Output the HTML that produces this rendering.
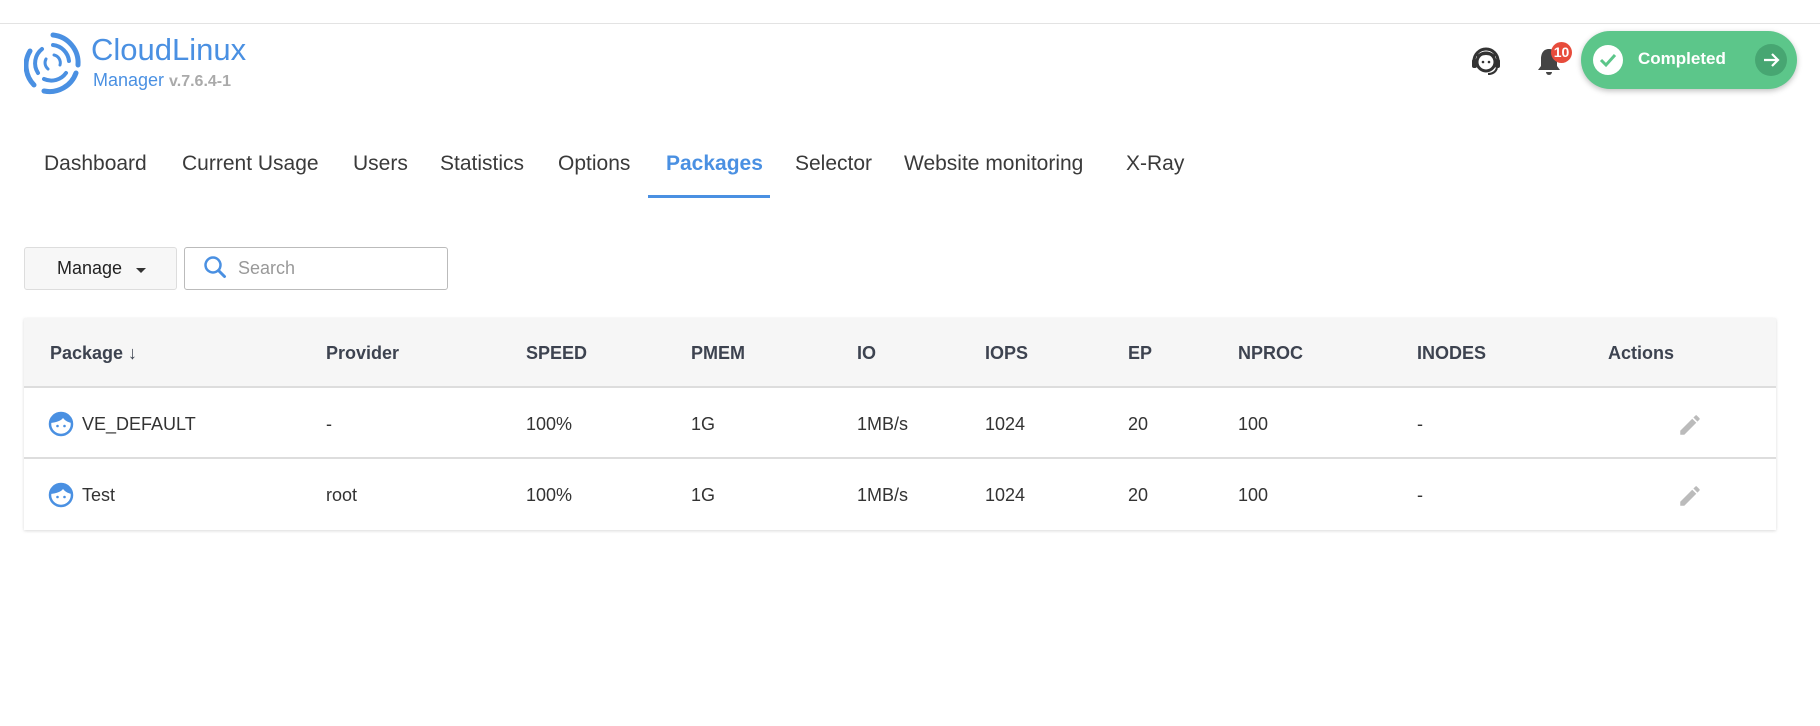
<!DOCTYPE html>
<html><head><meta charset="utf-8"><style>
*{margin:0;padding:0;box-sizing:border-box}
body{width:1820px;height:726px;background:#fff;font-family:"Liberation Sans",sans-serif;position:relative;overflow:hidden;color:#333}
.a{position:absolute;white-space:nowrap}
.nav{top:152px;font-size:21px;color:#3a3a3a}
.th{top:343px;font-size:18px;font-weight:bold;color:#3d4350}
.td{font-size:18px;color:#333}
</style></head><body>
<div class="a" style="left:0;top:23px;width:1820px;height:1px;background:#e3e3e3"></div>
<svg class="a" style="left:24px;top:31px" width="58" height="64" viewBox="0 0 58 64">
<g fill="none" stroke="#4a90e2" stroke-linecap="round">
<path d="M29 4 A28 28 0 0 1 54 34" stroke-width="5"/>
<path d="M52 42 A28 28 0 0 1 20 60" stroke-width="5"/>
<path d="M10 54 A28 28 0 0 1 6 20" stroke-width="5"/>
<path d="M29 14 A18 18 0 0 1 45 30" stroke-width="4"/>
<path d="M42 42 A18 18 0 0 1 20 48" stroke-width="4"/>
<path d="M14 42 A18 18 0 0 1 18 18" stroke-width="4"/>
<path d="M30 24 A8 8 0 0 1 36 34" stroke-width="3"/>
<path d="M24 38 A8 8 0 0 1 22 28" stroke-width="3"/>
</g></svg>
<div class="a" style="left:91px;top:32px;font-size:31px;color:#4a90e2">CloudLinux</div>
<div class="a" style="left:93px;top:70px;font-size:18px;color:#4a90e2">Manager <span style="color:#aaa;font-weight:bold;font-size:16px">v.7.6.4-1</span></div>

<svg class="a" style="left:1470px;top:43px" width="32" height="34" viewBox="0 0 32 34"><path d="M4 18a12 12 0 0 1 24 0" fill="none" stroke="#333" stroke-width="3"/><rect x="2" y="16" width="5" height="9" rx="2" fill="#333"/><rect x="25" y="16" width="5" height="9" rx="2" fill="#333"/><circle cx="16" cy="19" r="9" fill="#fff" stroke="#333" stroke-width="3"/><path d="M7 15q9-6 18 0v-3q-9-7-18 0z" fill="#333"/><circle cx="13" cy="19" r="1.3" fill="#333"/><circle cx="19" cy="19" r="1.3" fill="#333"/><path d="M27 25q-2 6-9 6" fill="none" stroke="#333" stroke-width="2"/></svg>
<svg class="a" style="left:1536px;top:46px" width="26" height="32" viewBox="0 0 26 32"><path d="M13 3c-6 0-8 5-8 10v7l-3 4h22l-3-4v-7c0-5-2-10-8-10z" fill="#444"/><path d="M10 26a3 3 0 0 0 6 0z" fill="#444"/></svg>
<div class="a" style="left:1551px;top:42px;width:21px;height:21px;border-radius:50%;background:#e74c3c;color:#fff;font-size:14px;font-weight:bold;text-align:center;line-height:21px">10</div>
<div class="a" style="left:1581px;top:31px;width:216px;height:58px;border-radius:29px;background:#5cc68a;box-shadow:0 2px 6px rgba(0,0,0,.25)"></div>
<div class="a" style="left:1593px;top:45px;width:30px;height:30px;border-radius:50%;background:#fff"></div>
<svg class="a" style="left:1593px;top:45px" width="30" height="30" viewBox="0 0 30 30"><path d="M8 15l5 5 9-10" fill="none" stroke="#5cc68a" stroke-width="3"/></svg>
<div class="a" style="left:1638px;top:49px;font-size:17px;font-weight:bold;color:#fff">Completed</div>
<div class="a" style="left:1755px;top:44px;width:32px;height:32px;border-radius:50%;background:#47a672"></div>
<svg class="a" style="left:1755px;top:44px" width="32" height="32" viewBox="0 0 32 32"><path d="M9 16h13M17 10l6 6-6 6" fill="none" stroke="#fff" stroke-width="2.2"/></svg>

<div class="a nav" style="left:44px">Dashboard</div>
<div class="a nav" style="left:182px">Current Usage</div>
<div class="a nav" style="left:353px">Users</div>
<div class="a nav" style="left:440px">Statistics</div>
<div class="a nav" style="left:558px">Options</div>
<div class="a nav" style="left:666px;color:#4a90e2;font-weight:bold">Packages</div>
<div class="a nav" style="left:795px">Selector</div>
<div class="a nav" style="left:904px">Website monitoring</div>
<div class="a nav" style="left:1126px">X-Ray</div>
<div class="a" style="left:648px;top:195px;width:122px;height:3px;background:#4a90e2"></div>

<div class="a" style="left:24px;top:247px;width:153px;height:43px;border:1px solid #ddd;border-radius:3px;background:#f7f7f7"></div>
<div class="a" style="left:57px;top:258px;font-size:18px;color:#222">Manage</div>
<div class="a" style="left:136px;top:268px;border-left:5px solid transparent;border-right:5px solid transparent;border-top:5px solid #333"></div>
<div class="a" style="left:184px;top:247px;width:264px;height:43px;border:1.5px solid #bbb;border-radius:3px"></div>
<svg class="a" style="left:202px;top:254px" width="28" height="28" viewBox="0 0 28 28"><circle cx="11" cy="11" r="7.5" fill="none" stroke="#4a90e2" stroke-width="2.5"/><path d="M16.5 16.5l6 6" stroke="#4a90e2" stroke-width="3" stroke-linecap="round"/></svg>
<div class="a" style="left:238px;top:258px;font-size:18px;color:#999">Search</div>

<div class="a" style="left:24px;top:318px;width:1752px;height:212px;background:#fff;box-shadow:0 1px 3px rgba(0,0,0,.15)"></div>
<div class="a" style="left:24px;top:318px;width:1752px;height:70px;background:#f6f6f6;border-bottom:2px solid #ddd"></div>
<div class="a" style="left:24px;top:457px;width:1752px;height:2px;background:#ddd"></div>
<div class="a th" style="left:50px">Package ↓</div>
<div class="a th" style="left:326px">Provider</div>
<div class="a th" style="left:526px">SPEED</div>
<div class="a th" style="left:691px">PMEM</div>
<div class="a th" style="left:857px">IO</div>
<div class="a th" style="left:985px">IOPS</div>
<div class="a th" style="left:1128px">EP</div>
<div class="a th" style="left:1238px">NPROC</div>
<div class="a th" style="left:1417px">INODES</div>
<div class="a th" style="left:1608px">Actions</div>

<svg class="a" style="left:48px;top:411px" width="26" height="26" viewBox="0 0 26 26"><circle cx="13" cy="13" r="11" fill="#fff" stroke="#4a90e2" stroke-width="2.5"/><path d="M2 12a11 11 0 0 1 22 0q-6-1-9-5q-3 4-13 5z" fill="#4a90e2"/><circle cx="9.5" cy="15" r="1.3" fill="#4a90e2"/><circle cx="16.5" cy="15" r="1.3" fill="#4a90e2"/></svg>
<svg class="a" style="left:48px;top:482px" width="26" height="26" viewBox="0 0 26 26"><circle cx="13" cy="13" r="11" fill="#fff" stroke="#4a90e2" stroke-width="2.5"/><path d="M2 12a11 11 0 0 1 22 0q-6-1-9-5q-3 4-13 5z" fill="#4a90e2"/><circle cx="9.5" cy="15" r="1.3" fill="#4a90e2"/><circle cx="16.5" cy="15" r="1.3" fill="#4a90e2"/></svg>

<div class="a td" style="top:414px;left:82px">VE_DEFAULT</div>
<div class="a td" style="top:414px;left:326px">-</div>
<div class="a td" style="top:414px;left:526px">100%</div>
<div class="a td" style="top:414px;left:691px">1G</div>
<div class="a td" style="top:414px;left:857px">1MB/s</div>
<div class="a td" style="top:414px;left:985px">1024</div>
<div class="a td" style="top:414px;left:1128px">20</div>
<div class="a td" style="top:414px;left:1238px">100</div>
<div class="a td" style="top:414px;left:1417px">-</div>

<div class="a td" style="top:485px;left:82px">Test</div>
<div class="a td" style="top:485px;left:326px">root</div>
<div class="a td" style="top:485px;left:526px">100%</div>
<div class="a td" style="top:485px;left:691px">1G</div>
<div class="a td" style="top:485px;left:857px">1MB/s</div>
<div class="a td" style="top:485px;left:985px">1024</div>
<div class="a td" style="top:485px;left:1128px">20</div>
<div class="a td" style="top:485px;left:1238px">100</div>
<div class="a td" style="top:485px;left:1417px">-</div>

<svg class="a" style="left:1677px;top:412px" width="26" height="26" viewBox="0 0 24 24"><path d="M3 17.25V21h3.75L17.81 9.94l-3.75-3.75L3 17.25zM20.71 7.04a1 1 0 0 0 0-1.41l-2.34-2.34a1 1 0 0 0-1.41 0l-1.83 1.83 3.75 3.75 1.83-1.83z" fill="#bbb"/></svg>
<svg class="a" style="left:1677px;top:483px" width="26" height="26" viewBox="0 0 24 24"><path d="M3 17.25V21h3.75L17.81 9.94l-3.75-3.75L3 17.25zM20.71 7.04a1 1 0 0 0 0-1.41l-2.34-2.34a1 1 0 0 0-1.41 0l-1.83 1.83 3.75 3.75 1.83-1.83z" fill="#bbb"/></svg>
</body></html>
